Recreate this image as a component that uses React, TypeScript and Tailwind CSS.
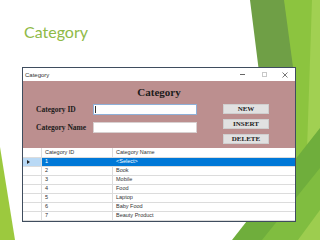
const rows: [string, string][] = [
  ["1", "<Select>"],
  ["2", "Book"],
  ["3", "Mobile"],
  ["4", "Food"],
  ["5", "Laptop"],
  ["6", "Baby Food"],
  ["7", "Beauty Product"],
];

const serif = { fontFamily: '"Liberation Serif", "Times New Roman", serif' };
const sans = { fontFamily: '"Liberation Sans", Arial, sans-serif' };

function Decor() {
  return (
    <svg className="absolute inset-0" width="320" height="240" viewBox="0 0 320 240">
      {/* bottom-left sliver */}
      <polygon points="0,147 15,240 0,240" fill="#9cc93e" />
      {/* right edge facets */}
      <polygon points="283,0 320,0 320,240 290,240" fill="#8cc43f" />
      <polygon points="312,0 320,0 320,240 304,240" fill="#a1d052" />
      <polygon points="250,0 284,0 293,67 270,160" fill="#6f9f46" />
      <polygon points="232,240 320,128 320,240" fill="#6fae3c" />
      <polygon points="262,240 320,168 320,240" fill="#80bd40" />
      <polygon points="298,240 320,210 320,240" fill="#9dcd4f" />
    </svg>
  );
}

function TitleBar() {
  return (
    <div className="flex h-[13px] items-center bg-white">
      <span className="ml-[2px] flex-1 text-[6px] leading-none text-[#333]" style={sans}>
        Category
      </span>
      <span className="flex w-[21px] justify-center">
        <span className="h-px w-[5px] bg-[#666]" />
      </span>
      <span className="flex w-[22px] justify-center">
        <span className="h-[5px] w-[5px] border border-[#c8c8c8]" />
      </span>
      <span className="flex w-[20px] justify-center">
        <svg width="6" height="6" viewBox="0 0 6 6" stroke="#555" strokeWidth="0.8">
          <path d="M0.5 0.5l5 5M5.5 0.5l-5 5" />
        </svg>
      </span>
    </div>
  );
}

function FormBody() {
  return (
    <div className="flex h-[67px] flex-col bg-[#bc8f8f] pt-[5px]">
      <div className="h-[13px] text-center text-[11px] font-bold leading-[13px] text-[#1c1c1c]" style={serif}>
        Category
      </div>
      <div className="mt-[5px] flex pl-[13px]">
        <div className="flex flex-col gap-[7px]">
          <div className="flex h-[11px] items-center">
            <span className="w-[57px] text-[7.5px] font-bold text-[#1c1c1c]" style={serif}>
              Category ID
            </span>
            <span className="relative h-[11px] w-[104px] border border-[#8fb0d8] bg-white">
              <span className="absolute left-[1px] top-[1px] h-[7px] w-px bg-[#333]" />
            </span>
          </div>
          <div className="flex h-[11px] items-center">
            <span className="w-[57px] text-[7.5px] font-bold text-[#1c1c1c]" style={serif}>
              Category Name
            </span>
            <span className="h-[11px] w-[104px] border border-[#d8d0d0] bg-white" />
          </div>
        </div>
        <div className="ml-[26px] flex w-[46px] flex-col gap-[5px]">
          {["NEW", "INSERT", "DELETE"].map((b) => (
            <div
              key={b}
              className="flex h-[10px] items-center justify-center border border-[#cfcfcf] bg-[#e1e1e1] text-[7px] font-bold leading-none text-[#222]"
              style={serif}
            >
              {b}
            </div>
          ))}
        </div>
      </div>
    </div>
  );
}

function Grid() {
  return (
    <div className="flex h-[73px] flex-col bg-white text-[5.5px] leading-none text-[#333]" style={sans}>
      <div className="flex h-[10px] border-b border-[#dcdcdc]">
        <div className="w-[19px] border-r border-[#dcdcdc]" />
        <div className="flex w-[71px] items-center border-r border-[#dcdcdc] pl-[3px]">Category ID</div>
        <div className="flex flex-1 items-center pl-[3px]">Category Name</div>
      </div>
      {rows.map(([id, name], i) => {
        const sel = i === 0;
        return (
          <div key={id} className="flex h-[9px] border-b border-[#dcdcdc]">
            <div
              className={`flex w-[19px] items-center border-r border-[#dcdcdc] pl-[4px] ${sel ? "bg-[#b9d9f5]" : ""}`}
            >
              {sel && (
                <svg width="3" height="4" viewBox="0 0 3 4">
                  <path d="M0 0l3 2-3 2z" fill="#222" />
                </svg>
              )}
            </div>
            <div
              className={`flex w-[71px] items-center pl-[3px] ${sel ? "bg-[#0078d7] text-white" : "border-r border-[#dcdcdc]"}`}
            >
              {id}
            </div>
            <div className={`flex flex-1 items-center pl-[3px] ${sel ? "bg-[#0078d7] text-white" : ""}`}>
              {name}
            </div>
          </div>
        );
      })}
    </div>
  );
}

export default function App() {
  return (
    <div className="relative h-[240px] w-[320px] overflow-hidden bg-white">
      <Decor />
      <div className="relative flex flex-col">
        <h1
          className="ml-[24px] mt-[22px] h-[20px] text-[16px] leading-[20px] text-[#8fba47]"
          style={{ fontFamily: 'Lato, "Open Sans", sans-serif' }}
        >
          Category
        </h1>
        <div className="ml-[22px] mt-[25px] w-[274px] border border-[#3f4d5e] bg-white">
          <TitleBar />
          <FormBody />
          <Grid />
        </div>
      </div>
    </div>
  );
}
